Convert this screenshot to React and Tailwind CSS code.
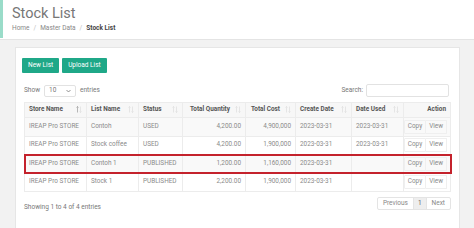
import React from "react";

const rows = [
  { store: "IREAP Pro STORE", list: "Contoh", status: "USED", qty: "4,200.00", cost: "4,900,000", created: "2023-03-31", used: "2023-03-31", bg: "bg-[#f9f9f9]" },
  { store: "IREAP Pro STORE", list: "Stock coffee", status: "USED", qty: "4,200.00", cost: "1,900,000", created: "2023-03-31", used: "2023-03-31", bg: "bg-white" },
  { store: "IREAP Pro STORE", list: "Contoh 1", status: "PUBLISHED", qty: "1,200.00", cost: "1,160,000", created: "2023-03-31", used: "", bg: "bg-[#f9f9f9]", hl: true },
  { store: "IREAP Pro STORE", list: "Stock 1", status: "PUBLISHED", qty: "2,200.00", cost: "1,900,000", created: "2023-03-31", used: "", bg: "bg-white" },
];

function SortIcon({ active }) {
  return (
    <svg width="6" height="7" viewBox="0 0 6 7" className="shrink-0">
      <path d="M1.5 0.5 V6.5 M0.5 1.5 L1.5 0.5 L2.5 1.5" stroke={active ? "#999" : "#ddd"} strokeWidth="0.7" fill="none" />
      <path d="M4.5 0.5 V6.5 M3.5 5.5 L4.5 6.5 L5.5 5.5" stroke="#ddd" strokeWidth="0.7" fill="none" />
    </svg>
  );
}

const cols = [
  { label: "Store Name", w: "w-[62px]", align: "left", active: true },
  { label: "List Name", w: "w-[52px]", align: "left" },
  { label: "Status", w: "w-[44px]", align: "left" },
  { label: "Total Quantity", w: "w-[63px]", align: "right" },
  { label: "Total Cost", w: "w-[50px]", align: "right" },
  { label: "Create Date", w: "w-[56px]", align: "left" },
  { label: "Date Used", w: "w-[52px]", align: "left" },
];

export default function App() {
  return (
    <div className="w-[474px] h-[228px] overflow-hidden bg-[#f2f2f2] text-[#666]" style={{ fontFamily: "Roboto, 'Liberation Sans', sans-serif" }}>
      <div className="h-[40px] bg-white border-b border-[#e4e4e4] flex">
        <div className="w-[3px] h-[38px] bg-[#9adcc9]" />
        <div className="pl-[9px] pt-[6px]">
          <div className="text-[14.5px] leading-[16px] text-[#777]">Stock List</div>
          <div className="mt-[2px] text-[6.5px] leading-[8px] text-[#888] flex gap-[4px]">
            <span>Home</span>
            <span className="text-[#bbb]">/</span>
            <span>Master Data</span>
            <span className="text-[#bbb]">/</span>
            <span className="font-bold text-[#444]">Stock List</span>
          </div>
        </div>
      </div>
      <div className="pl-[15px] pr-[14px] pt-[7px]">
        <div className="bg-white border border-[#e6e6e6] h-[200px] pl-[6px] pr-[8px] pt-[10px]">
          <div className="flex gap-[3px]">
            <div className="h-[15px] px-[6px] bg-[#1fa888] text-white text-[6.5px] flex items-center rounded-[1px]">New List</div>
            <div className="h-[15px] px-[6px] bg-[#1fa888] text-white text-[6.5px] flex items-center rounded-[1px]">Upload List</div>
          </div>
          <div className="pl-[2px]">
            <div className="flex justify-between items-center mt-[11px] h-[13px] text-[6.5px] text-[#777]">
              <div className="flex items-center">
                <span>Show</span>
                <div className="ml-[4px] w-[32px] h-[12px] border border-[#e2e2e2] rounded-[2px] flex items-center justify-between px-[4px]">
                  <span>10</span>
                  <svg width="5" height="4" viewBox="0 0 5 4"><path d="M0.5 1 L2.5 3 L4.5 1" stroke="#666" strokeWidth="0.7" fill="none" /></svg>
                </div>
                <span className="ml-[4px]">entries</span>
              </div>
              <div className="flex items-center pr-[2px]">
                <span>Search:</span>
                <div className="ml-[3px] w-[83px] h-[13px] border border-[#e2e2e2] rounded-[2px]" />
              </div>
            </div>
            <table className="mt-[5px] border-collapse text-[6.4px] w-[427px] table-fixed">
              <thead>
                <tr className="h-[15px] bg-[#f7f7f7]">
                  {cols.map((c) => (
                    <th key={c.label} className={`${c.w} border border-[#ececec] px-[4px] font-bold text-[#555]`}>
                      <div className={`flex items-center ${c.align === "right" ? "justify-end gap-[5px]" : "justify-between"}`}>
                        <span>{c.label}</span>
                        <SortIcon active={c.active} />
                      </div>
                    </th>
                  ))}
                  <th className="border border-[#ececec] px-[4px] font-bold text-[#555] text-right">Action</th>
                </tr>
              </thead>
              <tbody>
                {rows.map((r, i) => (
                  <tr key={i} className={`h-[18.5px] ${r.bg} text-[#8a8a8a] ${r.hl ? "outline outline-2 outline-[#c4222c] -outline-offset-1" : ""}`}>
                    <td className="border border-[#ececec] px-[4px]">{r.store}</td>
                    <td className="border border-[#ececec] px-[4px]">{r.list}</td>
                    <td className="border border-[#ececec] px-[4px]">{r.status}</td>
                    <td className="border border-[#ececec] px-[4px] text-right">{r.qty}</td>
                    <td className="border border-[#ececec] px-[4px] text-right">{r.cost}</td>
                    <td className="border border-[#ececec] px-[4px]">{r.created}</td>
                    <td className="border border-[#ececec] px-[4px]">{r.used}</td>
                    <td className="border border-[#ececec] px-[3px]">
                      <div className="flex justify-end">
                        <span className="border border-[#efefef] px-[3px] py-[1px] rounded-l-[1px]">Copy</span>
                        <span className="border border-l-0 border-[#efefef] px-[3px] py-[1px] rounded-r-[1px]">View</span>
                      </div>
                    </td>
                  </tr>
                ))}
              </tbody>
            </table>
            <div className="flex justify-between items-start mt-[5px] text-[6.5px] text-[#777]">
              <span className="mt-[6px]">Showing 1 to 4 of 4 entries</span>
              <div className="flex h-[13px] border border-[#e4e4e4] rounded-[2px] text-[#888] mr-[0px]">
                <span className="px-[5px] flex items-center">Previous</span>
                <span className="px-[4px] flex items-center bg-[#eeeeee] border-x border-[#e4e4e4] text-[#666]">1</span>
                <span className="px-[5px] flex items-center">Next</span>
              </div>
            </div>
          </div>
        </div>
      </div>
    </div>
  );
}
